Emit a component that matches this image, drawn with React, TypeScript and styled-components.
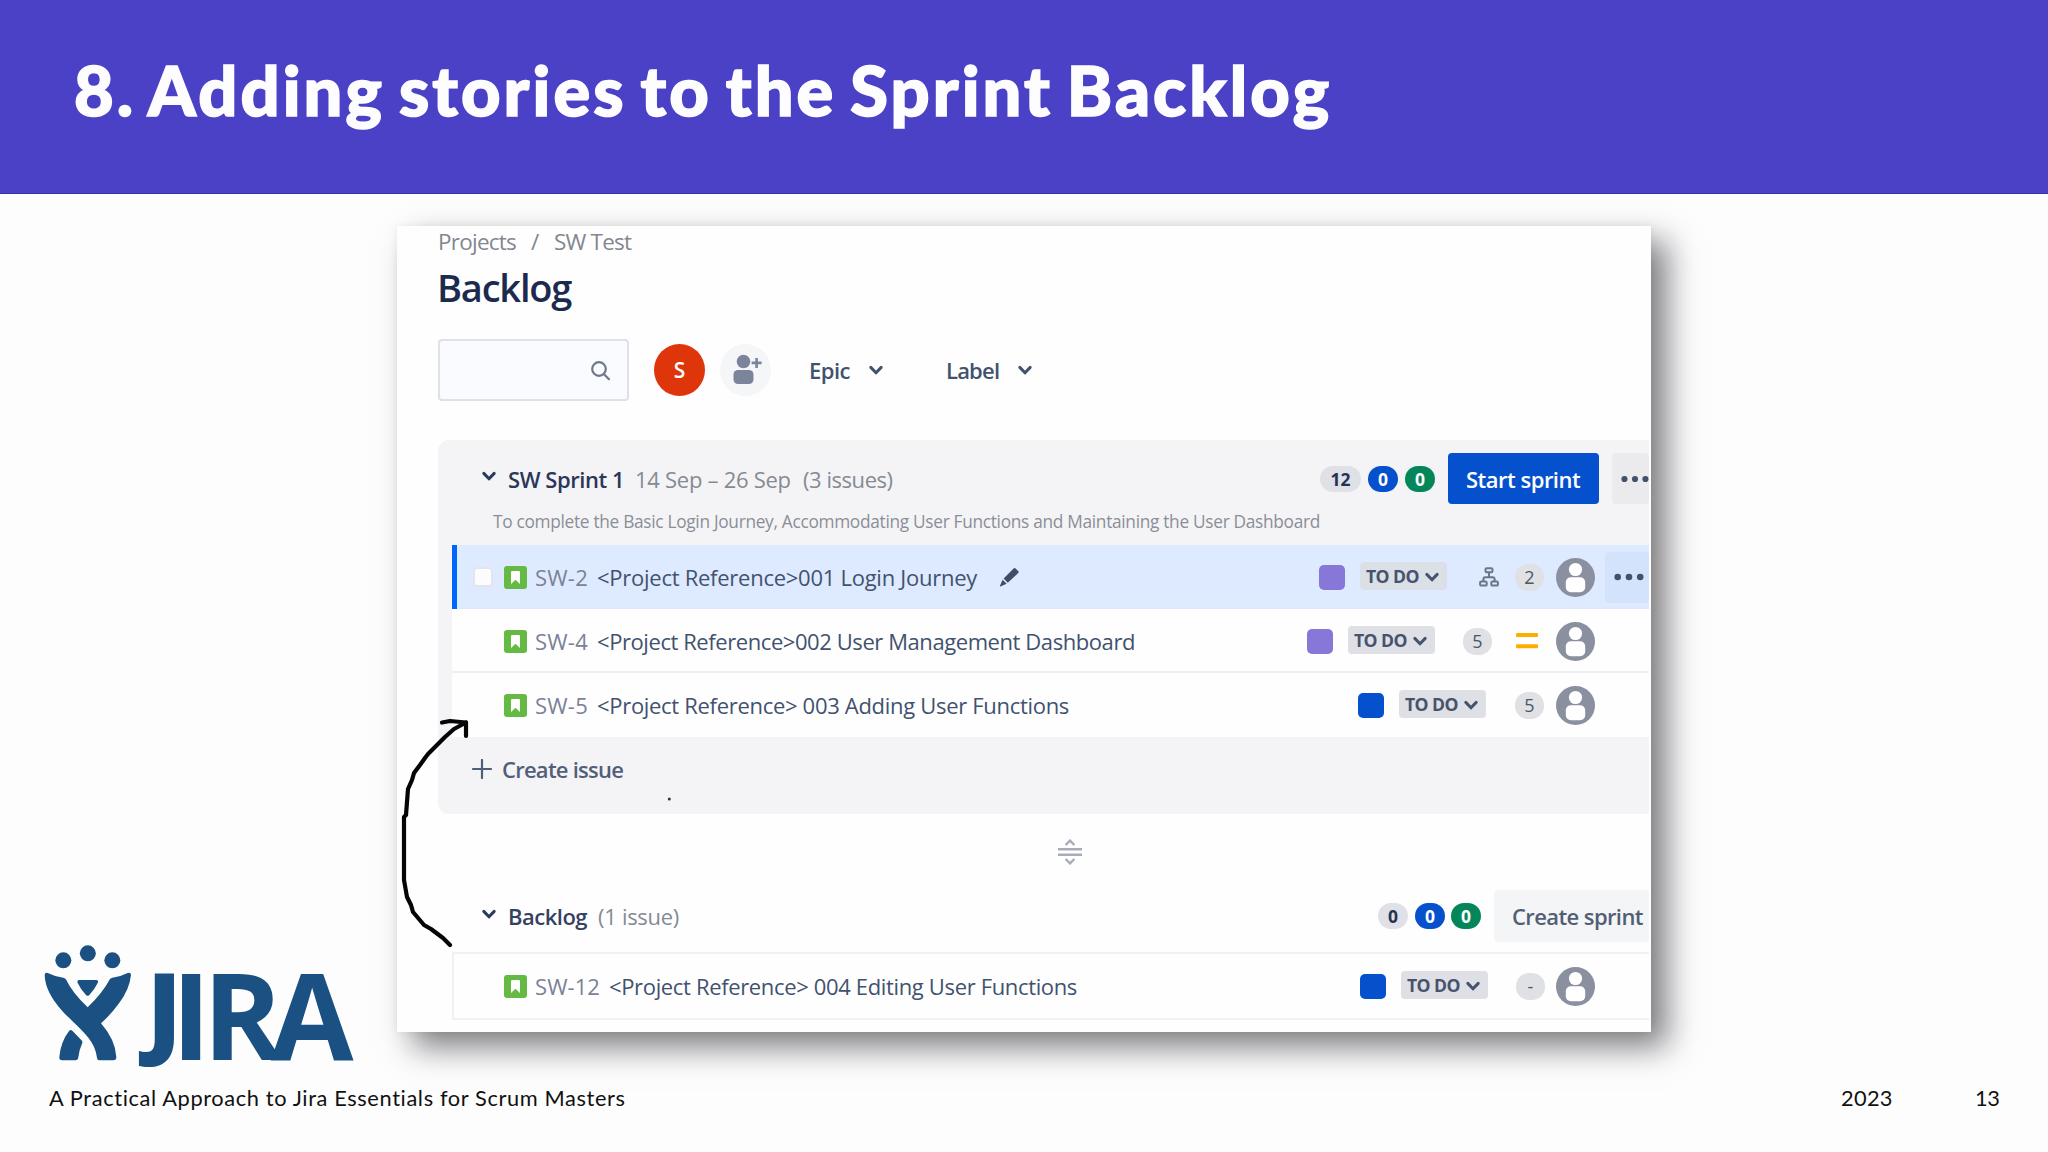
import React from "react";
import styled, { createGlobalStyle } from "styled-components";

const ui = `"Open Sans", "Noto Sans", sans-serif`;
const slideFont = `Lato, "Open Sans", sans-serif`;

const Global = createGlobalStyle`
  * { box-sizing: border-box; }
  body { margin: 0; background: #fefdfe; }
`;

const Slide = styled.div`
  width: 2048px;
  height: 1152px;
  display: flex;
  flex-direction: column;
  overflow: hidden;
  background: #fefdfe;
`;

const Banner = styled.header`
  height: 194px;
  flex: none;
  padding: 50px 0 0 74px;
  background: #4a41c6;
  border-bottom: 1px solid #3c2fae;
`;

const Stage = styled.main`
  height: 876px;
  flex: none;
  display: grid;
  grid-template-columns: 397px 1254px;
  align-items: start;
`;

const LogoSlot = styled.div`
  align-self: end;
  padding: 0 0 0 40px;
  height: 127px;
  svg { display: block; overflow: visible; }
`;

const Card = styled.section`
  position: relative;
  margin-top: 32px;
  height: 806px;
  padding: 1px 2px 0 41px;
  background: #fefeff;
  box-shadow: 16px 15px 30px rgba(8, 5, 10, 0.52), 0 0 8px rgba(10, 5, 15, 0.05);
  display: flex;
  flex-direction: column;
`;

interface LabelProps {
  $w?: number;
  $s: number;
  $ls?: number;
  $c?: string;
  $b?: number;
  $ml?: number;
  $lh?: number;
}
const Label = styled.span<LabelProps>`
  flex: none;
  display: block;
  white-space: nowrap;
  font-family: ${ui};
  font-size: ${(p) => p.$s}px;
  font-weight: ${(p) => p.$b ?? 400};
  letter-spacing: ${(p) => p.$ls ?? 0}px;
  line-height: ${(p) => p.$lh ?? 30}px;
  color: ${(p) => p.$c ?? "#42526e"};
  width: ${(p) => (p.$w ? p.$w + "px" : "auto")};
  margin-left: ${(p) => p.$ml ?? 0}px;
`;

const Title = styled.h1`
  margin: 0;
  font: 900 68.5px/80px ${slideFont};
  letter-spacing: 3.1px;
  word-spacing: -5.5px;
  -webkit-text-stroke: 1.6px #fdfdff;
  font-variant-ligatures: none;
  white-space: nowrap;
  color: #fdfdff;
`;
const FootText = styled.span<{ $w?: number; $ls: number }>`
  flex: none;
  width: ${(p) => (p.$w ? p.$w + "px" : "auto")};
  font: 400 21.8px/30px ${slideFont};
  letter-spacing: ${(p) => p.$ls}px;
  font-variant-ligatures: none;
  white-space: nowrap;
  color: #111;
`;

const Crumbs = styled.nav`display: flex; height: 30px;`;
const Heading = styled.div`height: 50px; margin-top: 5px;`;
const Toolbar = styled.div`
  display: flex;
  align-items: center;
  height: 62px;
  margin-top: 27px;
`;
const SearchBox = styled.div`
  width: 191px;
  height: 62px;
  border: 2px solid #dfe1e6;
  border-radius: 4px;
  background: #fafbfe;
  display: flex;
  align-items: center;
  justify-content: flex-end;
  padding-right: 16px;
`;
const Round = styled.div<{ $bg: string; $ml: number }>`
  width: 51px;
  height: 52px;
  border-radius: 50%;
  margin-left: ${(p) => p.$ml}px;
  background: ${(p) => p.$bg};
  display: flex;
  align-items: center;
  justify-content: center;
`;
const Gap = styled.div<{ $w: number }>`width: ${(p) => p.$w}px; flex: none;`;
const Grow = styled.div`flex: 1;`;

const SprintPanel = styled.div`
  margin-top: 39px;
  height: 374px;
  background: #f4f4f7;
  border-radius: 11px 0 0 11px;
`;
const SectionHead = styled.div<{ $pt?: number; $h: number }>`
  display: flex;
  align-items: center;
  padding-top: ${(p) => p.$pt ?? 0}px;
  height: ${(p) => p.$h}px;
`;
const Toggle = styled.div<{ $lift: number }>`
  display: flex;
  padding: 0 11px ${(p) => p.$lift}px 43px;
`;
const Goal = styled.div`height: 40px; padding: 2px 0 0 55px;`;

const Row = styled.div<{ $active?: boolean; $last?: boolean }>`
  margin-left: 14px;
  height: 64px;
  display: flex;
  align-items: center;
  background: ${(p) => (p.$active ? "#deeaff" : "#fefeff")};
  border-left: ${(p) => (p.$active ? "5px solid #0065ff" : "0")};
  box-shadow: ${(p) => (p.$last ? "none" : p.$active ? "inset 0 -2px 0 #e0e7f8" : "inset 0 -2px 0 #efeff3")};
  padding-left: ${(p) => (p.$active ? 16 : 52)}px;
`;
const BacklogRow = styled(Row)`
  height: 68px;
  margin-top: 10px;
  padding-left: 50px;
  border: 2px solid #f1f0f4;
  border-right: 0;
  box-shadow: none;
`;
const Check = styled.div`
  width: 20px;
  height: 20px;
  margin-right: 11px;
  border: 2px solid #e3e5ea;
  border-radius: 4px;
  background: #fcfcff;
`;
const Pill = styled.div<{ $bg: string; $w: number; $ml?: number; $h?: number }>`
  flex: none;
  width: ${(p) => p.$w}px;
  height: ${(p) => p.$h ?? 26}px;
  margin-left: ${(p) => p.$ml ?? 0}px;
  border-radius: 13px;
  background: ${(p) => p.$bg};
  display: flex;
  align-items: center;
  justify-content: center;
`;
const Swatch = styled.div<{ $bg: string }>`
  flex: none;
  width: 26px;
  height: 25px;
  border-radius: 5px;
  background: ${(p) => p.$bg};
`;
const Status = styled.div<{ $on?: boolean }>`
  flex: none;
  width: 87px;
  height: 28px;
  margin: 0 0 2px 15px;
  padding: 1px 0 0 6px;
  border-radius: 4px;
  background: ${(p) => (p.$on ? "#dbe0e6" : "#dfe0e5")};
  display: flex;
  align-items: center;
`;
const Button = styled.div<{ $bg: string; $w: number; $ml: number; $pl: number; $h?: number }>`
  flex: none;
  width: ${(p) => p.$w}px;
  height: ${(p) => p.$h ?? 51}px;
  margin-left: ${(p) => p.$ml}px;
  padding-left: ${(p) => p.$pl}px;
  border-radius: 4px;
  background: ${(p) => p.$bg};
  display: flex;
  align-items: center;
  overflow: hidden;
`;
const CreateRow = styled.div`
  height: 64px;
  display: flex;
  align-items: center;
  padding-left: 34px;
`;
const Resizer = styled.div`
  height: 75px;
  display: flex;
  align-items: center;
  padding-left: 620px;
`;
const Annotation = styled.svg`
  position: absolute;
  left: 0;
  top: 0;
  pointer-events: none;
`;
const Footer = styled.footer`
  height: 82px;
  padding: 13px 48px 0 49px;
  display: flex;
`;

const Chevron = ({ c = "#42526e", w = 16 }: { c?: string; w?: number }) => (
  <svg width={w} height={w} viewBox="0 0 16 16" fill="none">
    <path d="M2.800 5.400 8 10.800l5.200-5.400" stroke={c} strokeWidth="3" strokeLinecap="round" strokeLinejoin="round" />
  </svg>
);
const Story = () => (
  <svg width="23" height="23" viewBox="0 0 23 23">
    <rect width="23" height="23" rx="3" fill="#65ba43" />
    <path d="M7 6.200Q7 5 8.200 5h6.600Q16 5 16 6.200V18l-4.500-4.200L7 18z" fill="#fff" />
  </svg>
);
const Person = () => (
  <svg width="39" height="39" viewBox="0 0 39 39">
    <circle cx="19.500" cy="19.500" r="19.500" fill="#8a90a0" />
    <circle cx="19.500" cy="11.500" r="6.600" fill="#fff" />
    <rect x="9.800" y="19.300" width="19.400" height="15" rx="5" fill="#fff" />
  </svg>
);
const Dots = () => (
  <svg width="30" height="8" viewBox="0 0 30 8" fill="#44516d">
    <circle cx="3.700" cy="4" r="3.300" />
    <circle cx="15" cy="4" r="3.300" />
    <circle cx="26.200" cy="4" r="3.300" />
  </svg>
);
const Hierarchy = () => (
  <svg width="20" height="20" viewBox="0 0 20 20" fill="none" stroke="#6b7588" strokeWidth="2">
    <rect x="6.500" y="1.200" width="7" height="4" rx="1.200" />
    <rect x="1.100" y="14.600" width="6.600" height="4" rx="1.200" />
    <rect x="12.300" y="14.600" width="6.600" height="4" rx="1.200" />
    <path d="M10 5.200v5M4.400 14.600v-2.400q0-2 2-2h7.200q2 0 2 2v2.400" />
  </svg>
);
const Pencil = () => (
  <svg width="21" height="21" viewBox="0 0 21 21" fill="#3f4d69">
    <path d="M14.600 1.600q1-1 2 0l2.600 2.500q.9 1 0 2L8.800 15.800 4.600 11.600z" />
    <path d="M3.600 12.800l4 4L1.400 19.400Q.7 19.600 1 18.800z" />
  </svg>
);
const Medium = () => (
  <svg width="22" height="18" viewBox="0 0 22 18" fill="#ffab00">
    <rect y="1" width="22" height="4" rx="1.200" />
    <rect y="12.300" width="22" height="4" rx="1.200" />
  </svg>
);

const Todo = ({ on }: { on?: boolean }) => (
  <Status $on={on}>
    <Label $w={58} $s={17.6} $b={700} $ls={-0.6} $lh={27} $c="#47536e">TO DO</Label>
    <Chevron w={16} c="#47536e" />
  </Status>
);
const Points = ({ children, ml }: { children: string; ml: number }) => (
  <Pill $bg="#e0e1e5" $w={29} $h={27} $ml={ml}>
    <Label $s={18} $c="#4d5566">{children}</Label>
  </Pill>
);

const Estimates = ({ first, w, g }: { first: string; w: number; g: number[] }) => (
  <>
    <Pill $bg="#dfe1e6" $w={w}><Label $s={17.5} $b={700} $c="#253353">{first}</Label></Pill>
    <Pill $bg="#0550cc" $w={30} $ml={g[0]}><Label $s={17.5} $b={700} $c="#fff">0</Label></Pill>
    <Pill $bg="#03875a" $w={30} $ml={g[1]}><Label $s={17.5} $b={700} $c="#fff">0</Label></Pill>
  </>
);

const Logo = () => (
  <svg width="316.67" height="126.67" viewBox="120 70 950 380" fill="#1a5182">
    <circle cx="190" cy="122" r="24" />
    <circle cx="263.500" cy="101" r="24" />
    <circle cx="337" cy="122" r="24" />
    <path d="M238 181H288Q297 181 293 190Q284 209 268 226Q263 231 258 226Q242 209 233 190Q230 181 238 181Z" />
    <path d="M134 165Q135 157 143 160Q165 171 190 174Q196 175 199 181Q216 218 263 263Q309 218 328 181Q331 175 337 174Q362 171 383 160Q392 157 393 165Q389 209 356 252Q332 285 303 311Q346 360 349 412Q349 422 340 422H300Q292 422 291 414C286 368 252 337 216 303C176 266 135 217 134 165Z" />
    <path d="M207 334Q212 329 217 333L246 363Q249 367 246 372Q237 391 235 413Q234 422 226 422H187Q177 422 178 412Q182 367 207 334Z" />
    <text fontFamily="'Open Sans', sans-serif" fontWeight="700" fontSize="360">
      <tspan x="440" y="376" fontSize="297" fontWeight="800">J</tspan>
      <tspan x="514 608 812" y="421">IRA</tspan>
    </text>
  </svg>
);

export default function App() {
  return (
    <Slide>
      <Global />
      <Banner>
        <Title>8. Adding stories to the Sprint Backlog</Title>
      </Banner>
      <Stage>
        <LogoSlot><Logo /></LogoSlot>
        <Card>
          <Crumbs>
            <Label $s={22.5} $ls={-0.76} $w={93} $c="#83878f">Projects</Label>
            <Label $s={22.5} $w={23} $c="#83878f">/</Label>
            <Label $s={22.5} $ls={-0.8} $c="#83878f">SW Test</Label>
          </Crumbs>
          <Heading><Label $s={38} $ls={-1.2} $b={600} $lh={50} $ml={-1} $c="#1c2b4d">Backlog</Label></Heading>
          <Toolbar>
            <SearchBox>
              <svg width="21" height="21" viewBox="0 0 21 21" fill="none" stroke="#6f778a" strokeWidth="2.200" strokeLinecap="round">
                <circle cx="9" cy="9" r="6.800" /><path d="M14 14.200l5 5" />
              </svg>
            </SearchBox>
            <Round $bg="#de350b" $ml={25}><Label $s={21} $b={600} $c="#fff">S</Label></Round>
            <Round $bg="#f4f6f8" $ml={15}>
              <svg width="51" height="52" viewBox="0 0 51 52" fill="#7b849b">
                <circle cx="23.500" cy="17.500" r="6.800" />
                <rect x="13.500" y="26" width="20" height="14" rx="4.500" />
                <path d="M35.300 14h2.600v3.600h3.700v2.600h-3.700v3.700h-2.600v-3.700h-3.700v-2.600h3.700z" />
              </svg>
            </Round>
            <Label $s={22} $ls={-0.5} $b={600} $w={59} $ml={38}>Epic</Label>
            <Chevron />
            <Label $s={22} $ls={-0.8} $b={600} $w={71} $ml={62}>Label</Label>
            <Chevron />
          </Toolbar>

          <SprintPanel>
            <SectionHead $h={65} $pt={12}>
              <Toggle $lift={6}><Chevron c="#2c3a5a" /></Toggle>
              <Label $s={22} $ls={-0.45} $b={600} $w={127} $c="#2c3656">SW Sprint 1</Label>
              <Label $s={22} $ls={-0.28} $w={168} $c="#858a93">14 Sep – 26 Sep</Label>
              <Label $s={22} $ls={-0.45} $c="#858a93">(3 issues)</Label>
              <Grow />
              <Estimates first="12" w={41} g={[7, 7]} />
              <Button $bg="#0550cc" $w={151} $ml={13} $pl={18}><Label $s={22} $ls={-0.5} $b={600} $c="#fff">Start sprint</Label></Button>
              <Button $bg="#ebebed" $w={37} $ml={13} $pl={9}><Dots /></Button>
            </SectionHead>
            <Goal>
              <Label $s={17.3} $ls={-0.303} $c="#8b8e96">To complete the Basic Login Journey, Accommodating User Functions and Maintaining the User Dashboard</Label>
            </Goal>
            <Row $active>
              <Check /><Story />
              <Label $s={22} $ls={0.24} $w={61} $ml={8} $c="#7b8296">SW-2</Label>
              <Label $s={22} $ls={-0.261} $ml={1}>&lt;Project Reference&gt;001 Login Journey</Label>
              <Gap $w={22} /><Pencil /><Grow />
              <Swatch $bg="#8777d9" /><Todo on /><Gap $w={32} /><Hierarchy />
              <Points ml={16}>2</Points><Gap $w={12} /><Person />
              <Button $bg="#d2e3fb" $w={44} $ml={10} $pl={9}><Dots /></Button>
            </Row>
            <Row>
              <Story />
              <Label $s={22} $ls={0.24} $w={61} $ml={8} $c="#7b8296">SW-4</Label>
              <Label $s={22} $ls={-0.425} $ml={1}>&lt;Project Reference&gt;002 User Management Dashboard</Label>
              <Grow />
              <Swatch $bg="#8777d9" /><Todo /><Points ml={28}>5</Points><Gap $w={24} /><Medium /><Gap $w={18} /><Person /><Gap $w={54} />
            </Row>
            <Row $last>
              <Story />
              <Label $s={22} $ls={0.24} $w={61} $ml={8} $c="#7b8296">SW-5</Label>
              <Label $s={22} $ls={-0.307} $ml={1}>&lt;Project Reference&gt; 003 Adding User Functions</Label>
              <Grow />
              <Swatch $bg="#0550cc" /><Todo /><Points ml={29}>5</Points><Gap $w={12} /><Person /><Gap $w={54} />
            </Row>
            <CreateRow>
              <svg width="20" height="20" viewBox="0 0 20 20" stroke="#505f79" strokeWidth="2.200" strokeLinecap="round"><path d="M10 1v18M1 10h18" /></svg>
              <Label $s={22} $ls={-0.75} $b={600} $ml={10} $c="#525e7a">Create issue</Label>
            </CreateRow>
          </SprintPanel>

          <Resizer>
            <svg width="24" height="26" viewBox="0 0 24 26" fill="none" stroke="#a7acb8" strokeWidth="2.400">
              <path d="M0 10.200h24M0 15.800h24M7.600 6 12 1.600 16.400 6M7.600 20 12 24.400 16.400 20" />
            </svg>
          </Resizer>

          <SectionHead $h={53}>
            <Toggle $lift={4}><Chevron c="#2c3a5a" /></Toggle>
            <Label $s={22} $ls={-0.5} $b={600} $w={90} $c="#36415f">Backlog</Label>
            <Label $s={22} $ls={-0.29} $c="#858a93">(1 issue)</Label>
            <Grow />
            <Estimates first="0" w={30} g={[7, 6]} />
            <Button $bg="#f4f5f7" $w={155} $ml={13} $pl={18} $h={52}><Label $s={22} $ls={-0.6} $b={600} $c="#525e74">Create sprint</Label></Button>
          </SectionHead>
          <BacklogRow>
            <Story />
            <Label $s={22} $ls={0.07} $w={73} $ml={8} $c="#7b8296">SW-12</Label>
            <Label $s={22} $ls={-0.349} $ml={1}>&lt;Project Reference&gt; 004 Editing User Functions</Label>
            <Grow />
            <Swatch $bg="#0550cc" /><Todo /><Points ml={28}>-</Points><Gap $w={11} /><Person /><Gap $w={54} />
          </BacklogRow>
          <Annotation width="1254" height="806" viewBox="397 226 1254 806" fill="none" stroke="#050507" strokeWidth="4.200" strokeLinecap="round" strokeLinejoin="round">
            <path d="M450 945 443 938 431 929 424 925 413 912 411 905 407 897 404 880V817L406 815 408 789 412 780 414 773 420 765 425 758 428 754 445 737 454 729 466 722.500" />
            <path d="M442 722.500 450 721 466 722.500V736" />
            <circle cx="669.300" cy="799" r="1.500" fill="#333" stroke="none" />
          </Annotation>
        </Card>
      </Stage>
      <Footer>
        <FootText $ls={0.62}>A Practical Approach to Jira Essentials for Scrum Masters</FootText>
        <Grow />
        <FootText $w={134} $ls={0.3}>2023</FootText>
        <FootText $w={25} $ls={-0.5}>13</FootText>
      </Footer>
    </Slide>
  );
}
